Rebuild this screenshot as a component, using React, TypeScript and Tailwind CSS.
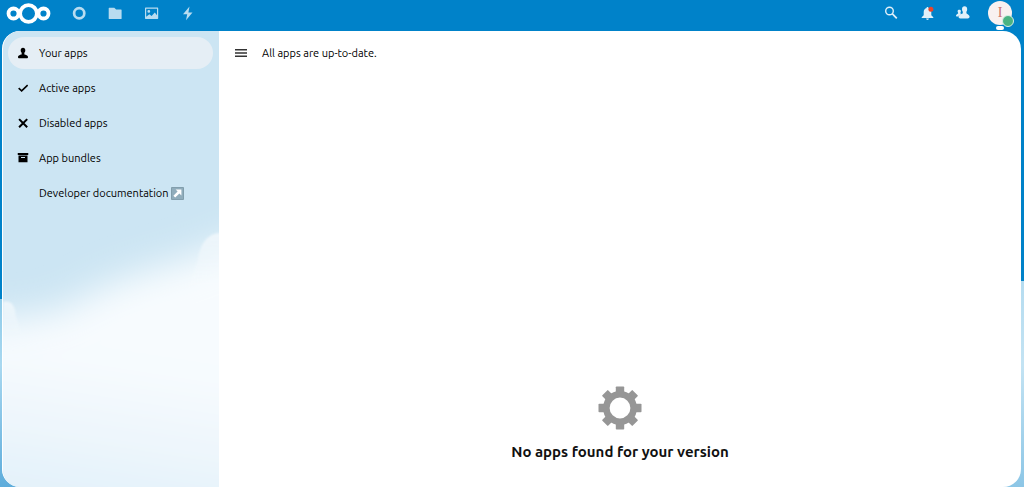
import React from "react";

const Logo = () => (
  <svg viewBox="0 0 46 22" className="h-[22px] w-[46px]" fill="none" stroke="#fff" aria-hidden="true">
    <circle cx="23.500" cy="11.500" r="8.400" strokeWidth="3.800" />
    <circle cx="8.500" cy="11.500" r="5" strokeWidth="3.800" />
    <circle cx="38.500" cy="11.500" r="5" strokeWidth="3.800" />
  </svg>
);

const DashboardIcon = () => (
  <svg viewBox="0 0 16 16" className="size-4" aria-hidden="true">
    <circle cx="8.200" cy="8.300" r="5.100" fill="none" stroke="currentColor" strokeWidth="2.700" />
  </svg>
);

const FilesIcon = () => (
  <svg viewBox="0 0 16 16" className="size-4" fill="currentColor" aria-hidden="true">
    <path d="M2.300 2.700h5l1.800 1.800h4.900a.6.6 0 0 1 .6.6v8.300a.6.6 0 0 1-.6.6H2.300a.6.6 0 0 1-.6-.6V3.300a.6.6 0 0 1 .6-.6z" />
  </svg>
);

const PhotosIcon = () => (
  <svg viewBox="0 0 16 16" className="size-4" fill="currentColor" aria-hidden="true">
    <path
      fillRule="evenodd"
      d="M2.600 2.600h12c.3 0 .6.3.6.6v10.100c0 .3-.3.6-.6.6h-12a.6.6 0 0 1-.6-.6V3.200c0-.3.3-.6.6-.6zM3.200 3.800v8l3.200-2.600 2.200 1.800 3.200-3.600 2.200 2.800V3.800zM5.800 5a1.400 1.400 0 1 1 0 2.800 1.400 1.400 0 0 1 0-2.800z"
    />
  </svg>
);

const ActivityIcon = () => (
  <svg viewBox="0 0 16 16" className="size-4" fill="currentColor" aria-hidden="true">
    <path d="M10.500 1.500 4 9.200h4.200L7 15.200l6.500-7.700H9.400z" />
  </svg>
);

const SearchIcon = () => (
  <svg viewBox="0 0 16 16" className="size-4" fill="none" stroke="currentColor" aria-hidden="true">
    <circle cx="6.500" cy="6" r="3.800" strokeWidth="1.400" />
    <path d="m9.400 8.900 4.400 4.400" strokeWidth="1.700" />
  </svg>
);

const BellIcon = () => (
  <svg viewBox="0 0 16 16" className="size-4" aria-hidden="true">
    <path
      fill="currentColor"
      d="M7.700 2h1.600v1.100c2 .5 3 2 3 3.900v3.200l2 2v.8H2.700v-.8l2-2V7c0-1.900 1-3.400 3-3.900zM7.100 13.500h2.800a1.400 1.400 0 0 1-2.800 0z"
    />
    <circle cx="11.900" cy="4.300" r="2.500" fill="#e9452b" />
  </svg>
);

const ContactsIcon = () => (
  <svg viewBox="0 0 16 16" className="size-4" fill="currentColor" aria-hidden="true">
    <path d="M9.600 1.300c1.700 0 2.600 1.200 2.600 2.900 0 1.100-.3 1.800-.8 2.500v1.500c.2.500 3.200 1.500 3.200 3.400 0 1.300-.8 1.900-2 1.900H5.400c-1.200 0-1.900-.6-1.900-1.900 0-1.900 4-2.900 4.300-3.400V6.700c-.5-.7-.8-1.400-.8-2.500 0-1.700.9-2.900 2.600-2.900z" />
    <path d="M4.300 4.800c.9 0 1.600.5 1.600 1.400 0 .6-.2 1.100-.5 1.500v.6c0 .4 1 .6 1.100.9-1.400.6-2.800 1.200-3.400 2.300H2c-.7 0-1-.4-1-1 0-1 1.900-1.700 2.100-2.100v-.7c-.3-.4-.5-.9-.5-1.500 0-.9.800-1.400 1.700-1.400z" />
  </svg>
);

const UserIcon = () => (
  <svg viewBox="0 0 16 16" className="size-3" aria-hidden="true">
    <path d="M8 1c2 0 3.100 1.500 3.100 3.500 0 1.400-.5 2.400-1.300 3.200v2.100c.3.700 4.800 1.200 4.800 3.300v1c0 .6-.4.800-1 .8H2.400c-.6 0-1-.2-1-.8v-1c0-2.100 4.500-2.600 4.800-3.300V7.700C5.400 6.900 4.900 5.900 4.900 4.500 4.900 2.500 6 1 8 1z" />
  </svg>
);

const CheckIcon = () => (
  <svg viewBox="0 0 16 16" className="size-3" aria-hidden="true">
    <path d="m2.200 8.200 4 3.600 8-7.600" fill="none" stroke="#000" strokeWidth="2.100" />
  </svg>
);

const CrossIcon = () => (
  <svg viewBox="0 0 16 16" className="size-3" aria-hidden="true">
    <path d="m2.800 2.800 10.800 10.800M13.600 2.800 2.800 13.600" fill="none" stroke="#000" strokeWidth="2.700" />
  </svg>
);

const BundleIcon = () => (
  <svg viewBox="0 0 16 16" className="size-3" aria-hidden="true">
    <path d="M1 1.300h14v2.700H1z" />
    <path fillRule="evenodd" d="M2 4.800h12v8.900H2zM5.300 6.800v1.100h5.400V6.800z" />
  </svg>
);

const ExternalIcon = () => (
  <svg viewBox="0 0 13 13" className="size-[13px] shrink-0" aria-hidden="true">
    <rect width="13" height="13" rx="1" fill="#7e9aa8" />
    <rect x=".8" y=".8" width="11.400" height="11.400" rx=".6" fill="#90adbc" />
    <path d="M4.600 2.600h5.800v5.800L8.400 6.400l-4.200 4.200-1.800-1.800 4.200-4.200z" fill="#fff" />
  </svg>
);

const MenuIcon = () => (
  <svg viewBox="0 0 12 10" className="h-[10px] w-3" fill="#333" aria-hidden="true">
    <path d="M0 1h12v1.600H0zM0 4.200h12v1.600H0zM0 7.400h12v1.600H0z" />
  </svg>
);

const Tooth = ({ angle }: { angle: number }) => (
  <rect x="17.800" y=".5" width="8.400" height="10" rx=".8" transform={`rotate(${angle} 22 22)`} />
);

const GearIcon = () => (
  <svg viewBox="0 0 44 44" className="size-11" fill="#969696" aria-hidden="true">
    {[0, 45, 90, 135, 180, 225, 270, 315].map((a) => (
      <Tooth key={a} angle={a} />
    ))}
    <circle cx="22" cy="22" r="13.700" fill="none" stroke="#969696" strokeWidth="6.600" />
  </svg>
);

const Clouds = () => (
  <svg
    viewBox="0 0 217 456"
    preserveAspectRatio="none"
    className="absolute inset-0 -z-10 size-full"
    aria-hidden="true"
  >
    <defs>
      <filter id="soft" x="-30%" y="-30%" width="160%" height="160%">
        <feGaussianBlur stdDeviation="18" />
      </filter>
      <filter id="edge" x="-30%" y="-30%" width="160%" height="160%">
        <feGaussianBlur stdDeviation="1" />
      </filter>
      <linearGradient id="cloud" gradientUnits="userSpaceOnUse" x1="130" y1="200" x2="90" y2="456">
        <stop offset="0" stopColor="#f8fcfe" />
        <stop offset=".5" stopColor="#f7fbfe" />
        <stop offset=".8" stopColor="#eef6fc" />
        <stop offset="1" stopColor="#e4f2fa" />
      </linearGradient>
      <linearGradient id="puff" x1="0" y1="0" x2="0" y2="1">
        <stop offset="0" stopColor="#eef6fb" />
        <stop offset="1" stopColor="#f8fcfe" stopOpacity="0" />
      </linearGradient>
    </defs>
    <rect width="217" height="456" fill="#cce5f3" />
    <path
      d="M-60 292 C0 286 42 288 70 272 C110 248 150 238 185 228 L280 190 V540 H-60z"
      fill="url(#cloud)"
      filter="url(#soft)"
    />
    <path d="M196 228c2-14 9-26 23-26v60h-34z" fill="url(#puff)" filter="url(#edge)" />
    <path d="M0 271c8-2 12 3 13 14l6 20H0z" fill="url(#puff)" filter="url(#edge)" />
  </svg>
);

const apps = [
  { label: "Dashboard", icon: <DashboardIcon /> },
  { label: "Files", icon: <FilesIcon /> },
  { label: "Photos", icon: <PhotosIcon /> },
  { label: "Activity", icon: <ActivityIcon /> },
];

const entries = [
  { label: "Your apps", icon: <UserIcon />, active: true },
  { label: "Active apps", icon: <CheckIcon /> },
  { label: "Disabled apps", icon: <CrossIcon /> },
  { label: "App bundles", icon: <BundleIcon /> },
  { label: "Developer documentation", icon: null, external: true },
];

export default function App() {
  return (
    <div className="flex min-h-screen flex-col bg-[linear-gradient(to_bottom,#0082c9_61.4%,#8ecbe9_61.4%,#a9d8f0_75%,#5dacdb_100%),linear-gradient(to_bottom,#0082c9_57.800%,#b5dcf0_57.800%,#c3e3f3_75%,#8cc6e6_100%)] bg-[size:50%_100%,100%_100%] bg-no-repeat font-['Ubuntu','Noto_Sans',sans-serif] text-[11px] leading-4 text-black">
      <header className="flex h-[31px] shrink-0 items-start justify-between bg-[#0082c9] pr-2 pl-[5px]">
        <div className="flex items-center pt-[2px]">
          <a href="#home" aria-label="Home">
            <Logo />
          </a>
          <nav className="ml-5 flex gap-5" aria-label="Apps">
            {apps.map((app) => (
              <a key={app.label} href="#app" aria-label={app.label} className="text-[#b8dcf0]">
                {app.icon}
              </a>
            ))}
          </nav>
        </div>
        <div className="flex text-[#e0f0f9]">
          <div className="mr-[17px] flex gap-5 pt-[5px]">
            <button type="button" aria-label="Search" className="size-4">
              <SearchIcon />
            </button>
            <button type="button" aria-label="Notifications" className="size-4">
              <BellIcon />
            </button>
            <button type="button" aria-label="Contacts" className="size-4">
              <ContactsIcon />
            </button>
          </div>
          <button type="button" aria-label="Settings menu" className="relative mr-1 flex flex-col items-center pt-px">
            <span className="flex size-6 items-center justify-center rounded-full bg-[#f8f1f0] font-['Liberation_Serif',serif] text-sm text-[#c9726b]">
              I
            </span>
            <span className="absolute top-[15px] -right-[2px] size-3 rounded-full border border-[#d5efe6] bg-[#49b382]" />
            <span className="mt-px h-1 w-2 rounded-sm bg-white" />
          </button>
        </div>
      </header>

      <div className="mr-[3px] ml-[2px] flex flex-1 overflow-hidden rounded-[18px] bg-white">
        <nav
          aria-label="App categories"
          className="relative isolate w-[217px] shrink-0 overflow-hidden rounded-l-[18px] border-l border-white/70 pt-[6px] pr-[6px] pl-[5px]"
        >
          <Clouds />
          <ul className="flex flex-col gap-[3px]">
            {entries.map((entry) => (
              <li key={entry.label}>
                <a
                  href="#category"
                  aria-current={entry.active ? "page" : undefined}
                  className={
                    entry.active
                      ? "flex h-8 items-center gap-[10px] rounded-full bg-[#e5eef5] pl-[9px]"
                      : "flex h-8 items-center gap-[10px] rounded-full pl-[9px]"
                  }
                >
                  <span className="size-3">{entry.icon}</span>
                  <span className="flex items-center gap-[2px]">
                    {entry.label}
                    {entry.external && <ExternalIcon />}
                  </span>
                </a>
              </li>
            ))}
          </ul>
        </nav>

        <main className="flex flex-1 flex-col">
          <div className="flex h-11 items-center gap-[15px] pl-4">
            <button type="button" aria-label="Toggle navigation">
              <MenuIcon />
            </button>
            <p>All apps are up-to-date.</p>
          </div>
          <div className="flex flex-1 flex-col items-center justify-end gap-3 pb-[25px]">
            <GearIcon />
            <h2 className="text-[15px] leading-5 font-bold text-[#111]">No apps found for your version</h2>
          </div>
        </main>
      </div>
    </div>
  );
}
